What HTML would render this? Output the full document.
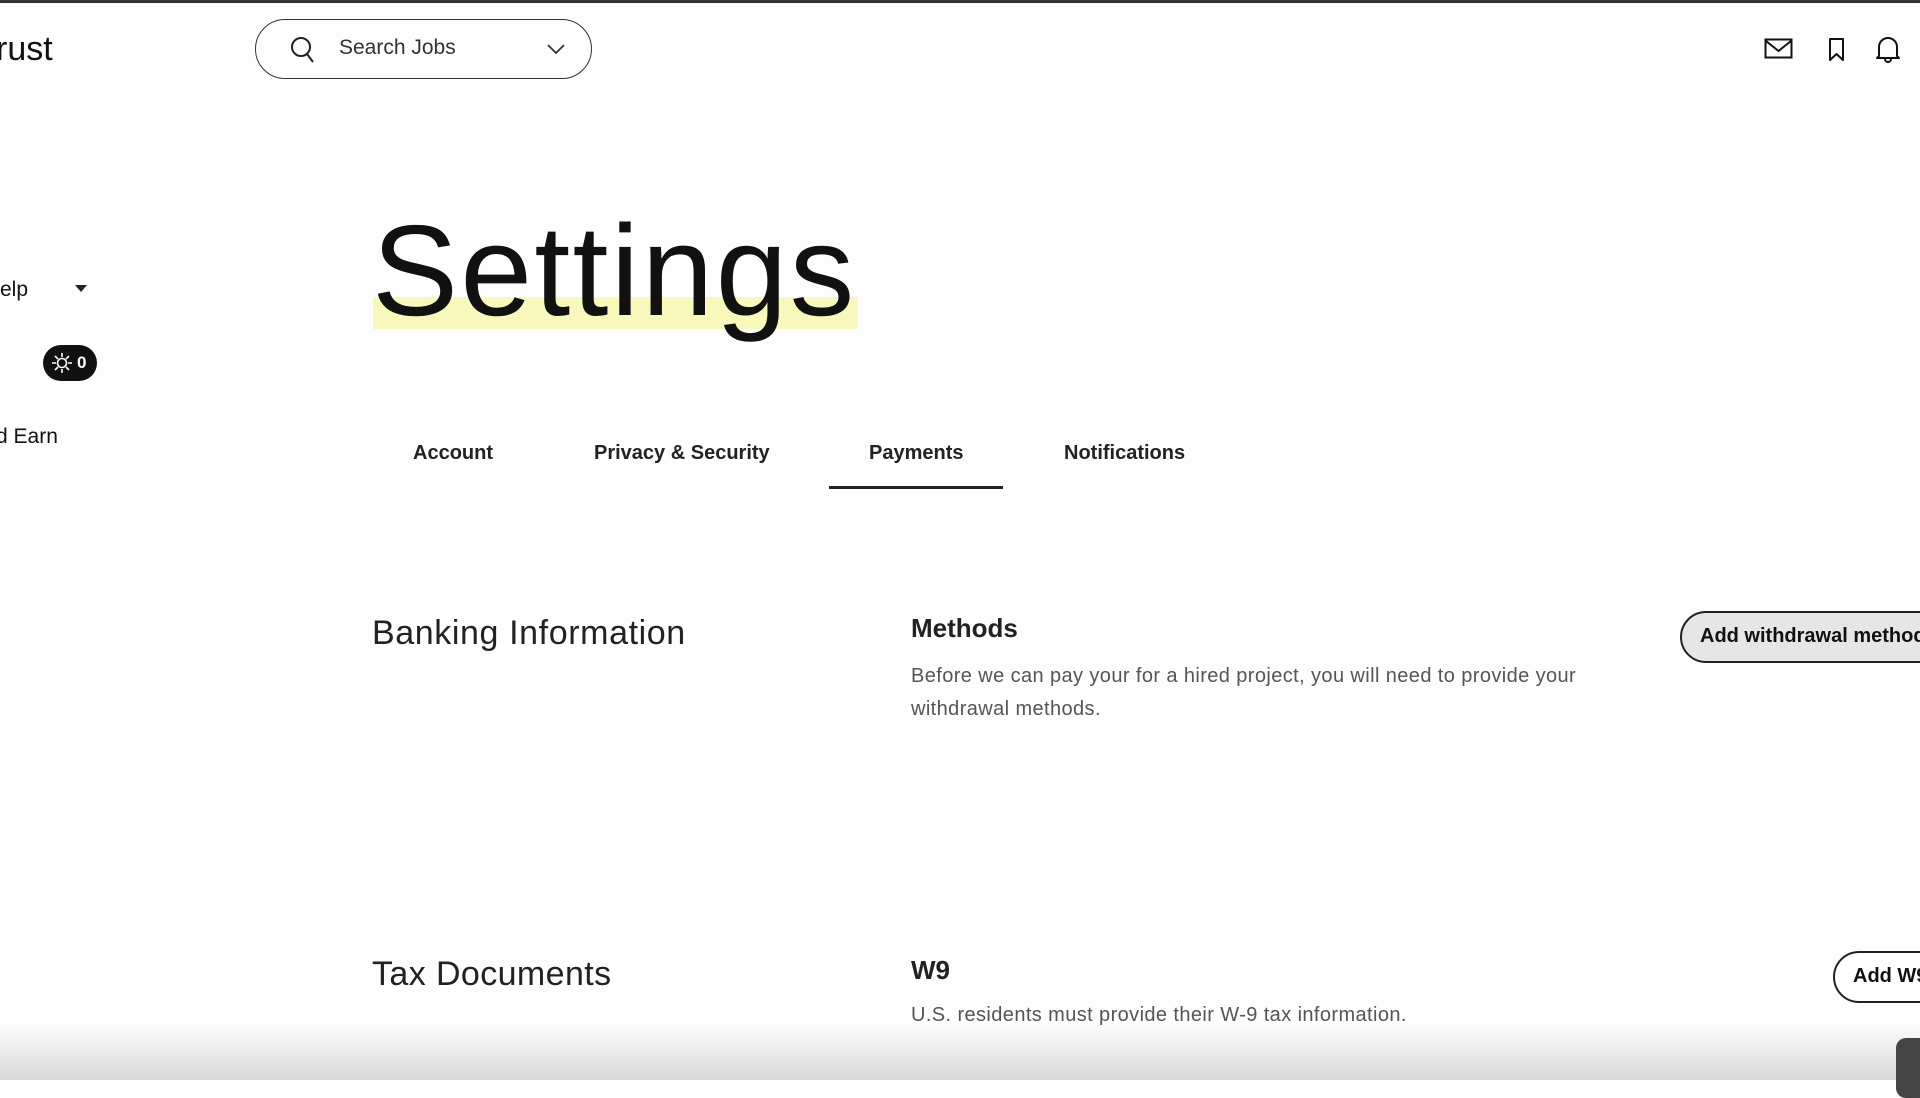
<!DOCTYPE html>
<html><head><meta charset="utf-8"><style>
*{margin:0;padding:0;box-sizing:border-box}
body{width:1920px;height:1080px;overflow:hidden;background:#fdfdfd;font-family:"Liberation Sans",sans-serif;color:#111;position:relative}
.a{position:absolute;white-space:nowrap}
</style></head><body>
<div class="a" style="left:0;top:0;width:1920px;height:3px;background:#333"></div>
<div class="a" style="left:-4px;top:30px;font-size:34px;letter-spacing:0px">rust</div>
<div class="a" style="left:255px;top:19px;width:337px;height:60px;border:1.5px solid #333;border-radius:30px"></div>
<svg class="a" style="left:289px;top:35px" width="28" height="30" viewBox="0 0 28 30"><circle cx="12" cy="12" r="9" fill="none" stroke="#222" stroke-width="2"/><path d="M18 19l6 8" stroke="#222" stroke-width="2"/></svg>
<div class="a" style="left:339px;top:36px;font-size:21px;color:#333">Search Jobs</div>
<svg class="a" style="left:546px;top:42px" width="20" height="14"><path d="M2 3l8 8 8-8" fill="none" stroke="#333" stroke-width="1.8"/></svg>
<svg class="a" style="left:1764px;top:38px" width="30" height="22"><rect x="1.5" y="1.5" width="26" height="18" fill="none" stroke="#111" stroke-width="2"/><path d="M2 3l12.5 10L27 3" fill="none" stroke="#111" stroke-width="2"/></svg>
<svg class="a" style="left:1827px;top:37px" width="20" height="25"><path d="M3 2h13v21l-6.5-6L3 23z" fill="none" stroke="#111" stroke-width="2" stroke-linejoin="round"/></svg>
<svg class="a" style="left:1874px;top:35px" width="28" height="28"><path d="M5 21V12a9 9 0 0118 0v9l2 2H3z" fill="none" stroke="#111" stroke-width="2" stroke-linejoin="round"/><path d="M11 24a3 3 0 006 0" fill="none" stroke="#111" stroke-width="2"/></svg>
<div class="a" style="left:0;top:278px;font-size:21px">elp</div>
<svg class="a" style="left:75px;top:285px" width="12" height="8"><path d="M0 0h12L6 7z" fill="#222"/></svg>
<div class="a" style="left:43px;top:345px;width:54px;height:36px;border-radius:18px;background:#111;color:#fff;font-weight:bold;font-size:17px;line-height:36px;padding-left:34px">0</div>
<svg class="a" style="left:51px;top:352px" width="22" height="22" viewBox="0 0 22 22"><circle cx="11" cy="11" r="4.5" fill="none" stroke="#fff" stroke-width="1.6"/><path d="M11 1v4M11 17v4M1 11h4M17 11h4M4 4l3 3M15 15l3 3M18 4l-3 3M4 18l3-3" stroke="#fff" stroke-width="1.6"/></svg>
<div class="a" style="left:-4px;top:425px;font-size:21px">d Earn</div>
<div class="a" style="left:373px;top:297px;width:485px;height:32px;background:#f8f8bc"></div>
<div class="a" style="left:372px;top:197px;font-size:129px;letter-spacing:2.3px;color:#111">Settings</div>
<div class="a" style="left:413px;top:442px;font-size:20px;font-weight:bold;color:#222">Account</div>
<div class="a" style="left:594px;top:442px;font-size:20px;font-weight:bold;color:#222">Privacy &amp; Security</div>
<div class="a" style="left:869px;top:442px;font-size:20px;font-weight:bold;color:#222">Payments</div>
<div class="a" style="left:1064px;top:442px;font-size:20px;font-weight:bold;color:#222">Notifications</div>
<div class="a" style="left:829px;top:486px;width:174px;height:3px;background:#222"></div>
<div class="a" style="left:372px;top:614px;font-size:34px;letter-spacing:0.6px;color:#222">Banking Information</div>
<div class="a" style="left:911px;top:613px;font-size:26px;font-weight:bold;color:#222">Methods</div>
<div class="a" style="left:911px;top:660px;font-size:20px;letter-spacing:0.4px;color:#555;line-height:33px">Before we can pay your for a hired project, you will need to provide your<br>withdrawal methods.</div>
<div class="a" style="left:1680px;top:611px;width:280px;height:52px;border:2.5px solid #222;border-radius:26px;background:#e6e6e6;font-size:20px;font-weight:bold;line-height:47px;padding-left:18px;color:#111">Add withdrawal method</div>
<div class="a" style="left:372px;top:955px;font-size:34px;letter-spacing:0.4px;color:#222">Tax Documents</div>
<div class="a" style="left:911px;top:955px;font-size:26px;font-weight:bold;color:#222">W9</div>
<div class="a" style="left:911px;top:1004px;font-size:20px;letter-spacing:0.4px;color:#555">U.S. residents must provide their W-9 tax information.</div>
<div class="a" style="left:1833px;top:951px;width:150px;height:52px;border:2.5px solid #222;border-radius:26px;background:#fff;font-size:20px;font-weight:bold;line-height:47px;padding-left:18px;color:#111">Add W9</div>
<div class="a" style="left:0;top:1025px;width:1920px;height:55px;background:linear-gradient(#fdfdfd00,#d8d8d8)"></div>
<div class="a" style="left:1896px;top:1038px;width:40px;height:60px;border-radius:10px;background:#444"></div>
</body></html>
